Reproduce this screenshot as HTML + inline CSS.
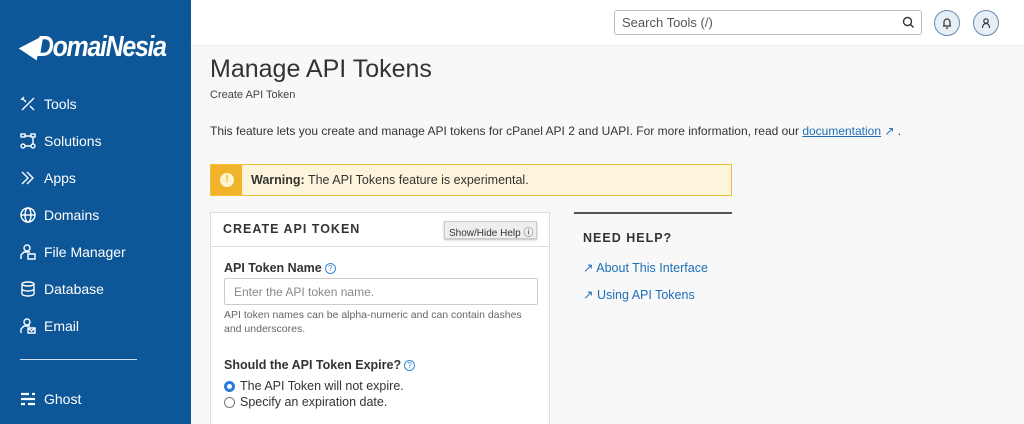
<!DOCTYPE html>
<html><head><meta charset="utf-8"><style>
*{box-sizing:border-box;margin:0;padding:0}
html,body{width:1024px;height:424px;overflow:hidden}
body{font-family:"Liberation Sans",sans-serif;background:#f8f8f8;position:relative}
.side{position:absolute;left:0;top:0;width:191px;height:424px;background:#0d5697;color:#fff}
.logo{position:absolute;left:18px;top:29px;font-size:29px;font-weight:bold;font-style:italic;letter-spacing:-1.5px;color:#fff;transform:scaleX(0.86);transform-origin:left;white-space:nowrap}
.nav{position:absolute;left:19px;font-size:14px;display:flex;align-items:center;font-weight:500}
.nav svg{width:18px;height:18px;margin-right:7px;fill:none;stroke:#fff;stroke-width:1.4}
.hr{position:absolute;left:20px;top:359px;width:117px;height:1px;background:#cfe0f0}
.top{position:absolute;left:191px;top:0;right:0;height:46px;background:#fff;border-bottom:1px solid #eee}
.search{position:absolute;left:614px;top:10px;width:308px;height:25px;border:1px solid #bbb;border-radius:3px;background:#fff;font-size:13px;color:#555;padding:4px 7px}
.circ{position:absolute;top:10px;width:26px;height:26px;border-radius:50%;border:1px solid #6b8bb0;background:#e6eef6}
h1{position:absolute;left:210px;top:55px;font-size:25px;font-weight:normal;color:#333}
.sub{position:absolute;left:210px;top:89px;font-size:11px;color:#444}
.desc{position:absolute;left:210px;top:124px;font-size:12px;color:#333}
.desc a{color:#1d6fb8;text-decoration:underline}
.warn{position:absolute;left:210px;top:164px;width:522px;height:32px;border:1px solid #f0c23b;background:#fcf5dc;font-size:12.5px;color:#333}
.warn .ic{position:absolute;left:0;top:0;width:31px;height:30px;background:#f0b32b}
.warn .ic span{position:absolute;left:9px;top:8px;width:14px;height:14px;border-radius:50%;background:#fff4d0;color:#f0b32b;font-size:10px;font-weight:bold;text-align:center;line-height:14px}
.warn p{position:absolute;left:40px;top:8px}
.panel{position:absolute;left:210px;top:212px;width:340px;height:220px;border:1px solid #ddd;background:#fff}
.ph{height:34px;border-bottom:1px solid #ddd;position:relative}
.ph b{position:absolute;left:12px;top:9px;font-size:12.5px;letter-spacing:1px;color:#333}
.btn{position:absolute;left:233px;top:8px;width:93px;height:18px;background:#eee;border:1px solid #ccc;font-size:10px;color:#333;padding:2px 4px;box-shadow:0 1px 2px #bbb;white-space:nowrap}
.lbl{position:absolute;left:13px;font-size:12.5px;font-weight:bold;color:#333}
.q{display:inline-block;width:11px;height:11px;border:1px solid #3a8ad0;border-radius:50%;color:#3a8ad0;font-size:8px;text-align:center;line-height:9px;font-weight:normal;margin-left:3px;vertical-align:1px}
.inp{position:absolute;left:13px;top:65px;width:314px;height:27px;border:1px solid #ccc;border-radius:2px;font-size:12px;color:#888;padding:6px 9px}
.hint{position:absolute;left:13px;top:95px;width:300px;font-size:10.5px;color:#666;line-height:14px}
.rad{position:absolute;left:13px;font-size:12.5px;color:#333;display:flex;align-items:center}
.rad i{display:inline-block;width:11px;height:11px;border-radius:50%;border:1px solid #777;margin-right:5px}
.help{position:absolute;left:574px;top:212px;width:158px;border-top:2px solid #555}
.help b{position:absolute;left:9px;top:17px;font-size:12.5px;letter-spacing:1px;color:#333;white-space:nowrap}
.hl{position:absolute;left:583px;font-size:12.5px;color:#1d6fb8}
</style></head><body>
<div class="side">
<div class="logo">◀DomaiNesia</div>
<div class="nav" style="top:95px"><svg viewBox="0 0 18 18"><path d="M3 15L15 3M3 3l4 4M11 11l4 4M2 5l3-3"/></svg>Tools</div>
<div class="nav" style="top:132px"><svg viewBox="0 0 18 18"><rect x="2" y="2" width="4" height="3"/><rect x="12" y="2" width="4" height="3"/><circle cx="4" cy="14" r="2"/><circle cx="14" cy="14" r="2"/><path d="M6 4h6M14 5v7M6 14h6"/></svg>Solutions</div>
<div class="nav" style="top:169px"><svg viewBox="0 0 18 18"><path d="M3 3l6 6-6 6M8 3l6 6-6 6"/></svg>Apps</div>
<div class="nav" style="top:206px"><svg viewBox="0 0 18 18"><circle cx="9" cy="9" r="7"/><ellipse cx="9" cy="9" rx="3" ry="7"/><path d="M2 9h14"/></svg>Domains</div>
<div class="nav" style="top:243px"><svg viewBox="0 0 18 18"><circle cx="8" cy="5" r="3"/><path d="M2 16v-4l3-3h6M9 11h7v5H9z"/></svg>File Manager</div>
<div class="nav" style="top:280px"><svg viewBox="0 0 18 18"><ellipse cx="9" cy="4" rx="6" ry="2"/><path d="M3 4v10c0 1 3 2 6 2s6-1 6-2V4M3 9c0 1 3 2 6 2s6-1 6-2"/></svg>Database</div>
<div class="nav" style="top:317px"><svg viewBox="0 0 18 18"><circle cx="8" cy="5" r="3"/><path d="M2 16v-4l3-3h6M9 11h7v5H9zM9 11l3.5 3 3.5-3"/></svg>Email</div>
<div class="hr"></div>
<div class="nav" style="top:390px"><svg viewBox="0 0 18 18" style="stroke-width:2.2"><path d="M2 4h8M13 4h3M2 9h14M2 14h4M9 14h7"/></svg>Ghost</div>
</div>
<div class="top"></div>
<div class="search">Search Tools (/)<svg style="position:absolute;right:6px;top:5px" width="13" height="13" viewBox="0 0 13 13" fill="none" stroke="#333" stroke-width="1.4"><circle cx="5.5" cy="5.5" r="4"/><path d="M8.5 8.5l3 3"/></svg></div>
<div class="circ" style="left:934px"><svg width="24" height="24" viewBox="0 0 24 24" fill="none" stroke="#333" stroke-width="1.2"><path d="M9 15v-4a3 3 0 016 0v4zM8 15h8M11 17h2"/></svg></div>
<div class="circ" style="left:973px"><svg width="24" height="24" viewBox="0 0 24 24" fill="none" stroke="#333" stroke-width="1.2"><circle cx="12" cy="10" r="2.2"/><path d="M8.5 17c0-3 1.5-4.5 3.5-4.5s3.5 1.5 3.5 4.5"/></svg></div>
<h1>Manage API Tokens</h1>
<div class="sub">Create API Token</div>
<div class="desc">This feature lets you create and manage API tokens for cPanel API 2 and UAPI. For more information, read our <a>documentation</a> <span style="color:#1d6fb8">↗</span> .</div>
<div class="warn"><div class="ic"><span>!</span></div><p><b>Warning:</b> The API Tokens feature is experimental.</p></div>
<div class="panel">
<div class="ph"><b>CREATE API TOKEN</b><div class="btn">Show/Hide Help ⓘ</div></div>
<div class="lbl" style="top:48px">API Token Name<span class="q">?</span></div>
<div class="inp">Enter the API token name.</div>
<div class="hint">API token names can be alpha-numeric and can contain dashes and underscores.</div>
<div class="lbl" style="top:145px">Should the API Token Expire?<span class="q">?</span></div>
<div class="rad" style="top:166px"><i style="border:3.5px solid #2a7ae2"></i>The API Token will not expire.</div>
<div class="rad" style="top:182px"><i></i>Specify an expiration date.</div>
</div>
<div class="help"><b>NEED HELP?</b></div>
<div class="hl" style="top:260px">↗ About This Interface</div>
<div class="hl" style="top:287px">↗ Using API Tokens</div>
</body></html>
